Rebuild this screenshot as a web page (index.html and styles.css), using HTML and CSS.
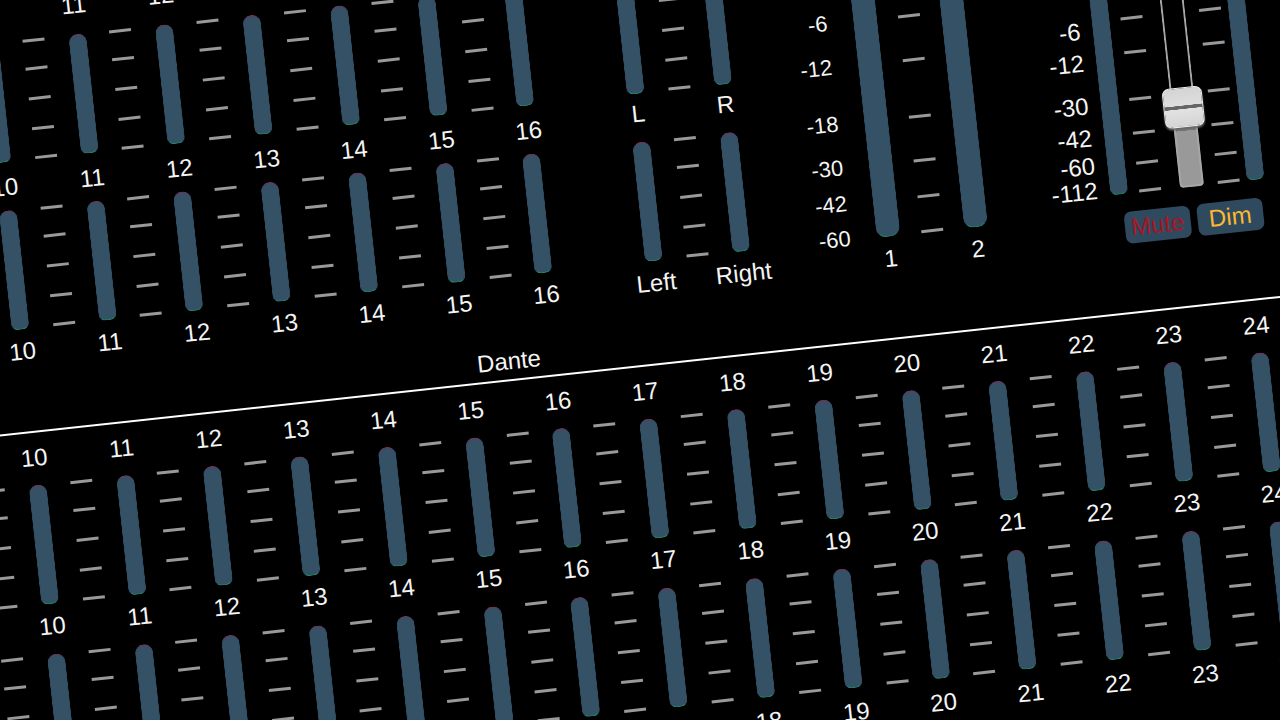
FILE: index.html
```html
<!DOCTYPE html>
<html lang="en">

<head>
  <meta charset="UTF-8">
  <meta name="viewport" content="width=device-width, initial-scale=1.0">
  <title>Mixer meters</title>
  <link rel="stylesheet" href="styles.css">
</head>

<body>

  <main class="board">
    <section class="sources">
      <div class="group">
        <div class="strip names" data-from="9" data-to="16"></div>
        <div class="strip low-labels" data-from="9" data-to="16"></div>
        <div class="strip" data-from="9" data-to="16"></div>
      </div>

      <div class="group stereo">
        <div class="strip high-labels" data-labels="L,R"></div>
        <div class="strip" data-labels="Left,Right"></div>
      </div>

      <div class="group mains">
        <ul class="scale">
          <li>-6</li>
          <li>-12</li>
          <li>-18</li>
          <li>-30</li>
          <li>-42</li>
          <li>-60</li>
        </ul>
        <div class="channel">
          <div class="bar"></div>
          <span class="label">1</span>
        </div>
        <ul class="marks">
          <li></li>
          <li></li>
          <li></li>
          <li></li>
          <li></li>
          <li></li>
        </ul>
        <div class="channel">
          <div class="bar"></div>
          <span class="label">2</span>
        </div>
      </div>

      <div class="group monitor">
        <ul class="scale">
          <li>-6</li>
          <li>-12</li>
          <li>-30</li>
          <li>-42</li>
          <li>-60</li>
          <li>-112</li>
        </ul>
        <div class="control">
          <div class="levels">
            <div class="bar"></div>
            <ul class="marks">
              <li></li>
              <li></li>
              <li></li>
              <li></li>
              <li></li>
              <li></li>
            </ul>
            <input class="fader" type="range" min="0" max="100" value="22" aria-label="Monitor level">
            <ul class="marks">
              <li></li>
              <li></li>
              <li></li>
              <li></li>
              <li></li>
              <li></li>
            </ul>
            <div class="bar"></div>
          </div>
          <div class="buttons">
            <button type="button" class="btn mute">Mute</button>
            <button type="button" class="btn dim">Dim</button>
          </div>
        </div>
      </div>
    </section>

    <section class="dante">
      <h2 class="title">Dante</h2>
      <div class="strip names" data-from="9" data-to="24"></div>
      <div class="strip" data-from="9" data-to="24"></div>
      <div class="strip last" data-from="9" data-to="24"></div>
    </section>
  </main>

  <script>
    const strips = document.querySelectorAll('.strip')

    const getLabels = (strip) => {
      if (strip.dataset.labels) return strip.dataset.labels.split(',')
      const labels = []
      for (let i = Number(strip.dataset.from); i <= Number(strip.dataset.to); i++) {
        labels.push(i)
      }
      return labels
    }

    const ticks = '<ul class="ticks"><li></li><li></li><li></li><li></li><li></li></ul>'

    for (const strip of strips) {
      const onlyNames = strip.classList.contains('names')
      const channels = getLabels(strip).map((label) => {
        const bar = onlyNames ? '' : '<div class="bar"></div>'
        return `<div class="channel">${bar}<span class="label">${label}</span></div>`
      })
      strip.innerHTML = channels.join(onlyNames ? '' : ticks)
    }
  </script>
</body>

</html>
```
FILE: styles.css
```css
:root {
  --col: 6.86vw;
  --half: calc(var(--col) / 2);
  --bar: #345166;
  --tick: #999;
}

* {
  box-sizing: border-box;
}

body {
  margin: 0;
  background: #000;
  color: #f4f4f4;
  font-family: "Liberation Sans", Arial, sans-serif;
  font-size: 24px;
  line-height: 24px;
  overflow: hidden;
}

ul {
  list-style: none;
  margin: 0;
  padding: 0;
}

.board {
  width: calc(var(--col) * 16);
  transform: rotate(-6.18deg) translateX(-125px);
  transform-origin: 0 0;
}

.sources {
  display: flex;
  align-items: flex-start;
}

.group {
  flex: none;
}

/* rows of small meters */
.strip {
  display: flex;
  min-height: 168px;
}

.channel {
  flex: none;
  width: var(--half);
  display: flex;
  flex-direction: column;
  align-items: center;
  gap: 10px;
}

.names {
  min-height: 42px;
  padding-top: 1px;
  gap: var(--half);
}

.low-labels .channel {
  gap: 13px;
}

.high-labels .channel {
  gap: 8px;
}

.label {
  white-space: nowrap;
}

.bar {
  flex: none;
  width: 18px;
  height: 120px;
  background: var(--bar);
  border: 1px solid;
  border-color: #7a3158 var(--bar) #1f8a6c;
  border-radius: 9px 9px 7px 7px;
}

.ticks {
  flex: none;
  width: var(--half);
  display: grid;
  grid-template-rows: 28px 30px 30px 29px 3px;
  align-content: start;
  justify-content: center;
}

.ticks li {
  width: 22px;
  height: 3px;
  background: var(--tick);
}

.stereo {
  margin-left: 67px;
  padding-top: 42px;
}

/* tall meters with a scale */
.mains,
.monitor {
  display: flex;
}

.scale,
.marks {
  flex: none;
  display: grid;
  align-content: start;
}

.scale {
  width: 60px;
  text-align: right;
}

.marks li {
  height: 24px;
  display: flex;
  align-items: center;
  justify-content: center;
}

.marks li::before {
  content: "";
  width: 22px;
  height: 3px;
  background: var(--tick);
}

.mains {
  margin-left: 28px;
}

.mains .scale,
.mains .marks {
  padding-top: 101px;
  grid-template-rows: 44px 57px 44px 36px 35px 24px;
}

.mains .scale {
  margin-right: 16px;
  font-size: 22px;
}

.mains .marks {
  width: var(--half);
}

.mains .bar {
  width: 24px;
  height: 331px;
  border-radius: 12px 12px 10px 10px;
}

.monitor {
  margin-left: 43px;
}

.monitor .scale {
  padding-top: 136px;
  margin-right: 12px;
  grid-template-rows: 32px 43px 32px 28px 25px 24px;
}

.monitor .marks {
  padding-top: 127px;
  grid-template-rows: 34px 47px 34px 30px 28px 24px;
}

.levels {
  display: grid;
  grid-template-columns: 18px 44px 40px 35px 18px;
}

.levels .bar {
  height: 314px;
}

.fader {
  appearance: none;
  writing-mode: vertical-lr;
  direction: rtl;
  width: 40px;
  height: 314px;
  margin: 0;
  background: transparent;
}

.fader::-webkit-slider-runnable-track {
  width: 24px;
  height: 314px;
  border-radius: 4px;
  background: linear-gradient(#000 78%, #777 78%, #777 82%, #999 82%);
  box-shadow: inset 0 0 0 2px #a6a6a6;
}

.fader::-webkit-slider-thumb {
  appearance: none;
  width: 40px;
  height: 40px;
  margin-left: -8px;
  border: 1px solid #f2f2f2;
  border-radius: 7px;
  background: linear-gradient(#d4d4d4, #dedede 45%, #666 46%, #666 54%, #e2e2e2 55%, #d4d4d4);
  box-shadow: 0 2px 2px #666;
}

.buttons {
  display: flex;
  gap: 7px;
  margin-top: 8px;
  padding-left: 11px;
}

.btn {
  width: 66px;
  height: 32px;
  padding: 0;
  border: 0;
  border-radius: 7px;
  background: #2f495e;
  font: inherit;
}

.mute {
  color: #a81523;
}

.dim {
  color: #fdb92e;
}

/* dante section */
.dante {
  margin-top: 24px;
}

.title {
  margin: 0;
  padding: 0 0 6px 560px;
  border-bottom: 2px solid #fff;
  font-size: 24px;
  font-weight: normal;
}

.dante .strip {
  min-height: 170px;
}

.dante .names {
  min-height: 52px;
  padding-top: 13px;
}

.dante .last .channel {
  gap: 12px;
}
```
